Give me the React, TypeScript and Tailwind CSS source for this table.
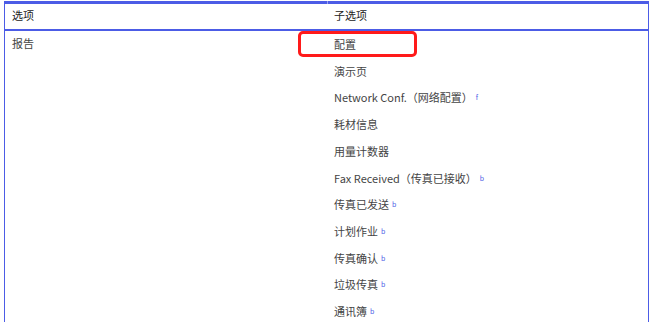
import React from "react";

type Sub = { label: string; note?: string };

const subs: Sub[] = [
  { label: "配置" },
  { label: "演示页" },
  { label: "Network Conf.（网络配置）", note: "f" },
  { label: "耗材信息" },
  { label: "用量计数器" },
  { label: "Fax Received（传真已接收）", note: "b" },
  { label: "传真已发送", note: "b" },
  { label: "计划作业", note: "b" },
  { label: "传真确认", note: "b" },
  { label: "垃圾传真", note: "b" },
  { label: "通讯簿", note: "b" },
];

export default function App() {
  return (
    <div
      className="w-[650px] h-[322px] overflow-hidden bg-white pt-px pl-1 pr-[1px] [text-spacing-trim:space-all]"
      style={{ fontFamily: '"Noto Sans CJK SC", "Noto Sans", sans-serif' }}
    >
      <div className="border-l border-r border-[#4c5ce6] h-[340px]">
        {/* header */}
        <div className="flex h-[30px] text-[11px] text-[#222] border-b-2 border-[#4c5ce6]">
          <div className="w-[322px] border-t-[3px] border-[#4c5ce6] flex items-center pl-[7px] pb-[2px]">选项</div>
          <div className="w-px border-t-[3px] border-[#9aa4f0]" />
          <div className="flex-1 border-t-[3px] border-[#4c5ce6] flex items-center pl-[6px] pb-[2px]">子选项</div>
        </div>
        {/* body */}
        <div className="grid grid-cols-[323px_1fr] text-[11px] text-[#444]">
          <div className="pl-[7px] pt-[4px]">报告</div>
          <div className="flex flex-col">
            {subs.map((s, i) => (
              <div key={i} className="h-[26.7px] flex items-center pl-[6px]">
                {i === 0 ? (
                  <div className="-ml-[36px] w-[119px] h-[26px] border-[3px] border-[#ff1a1a] rounded-[5px] flex items-center pl-[33px]">
                    {s.label}
                  </div>
                ) : (
                  <span>
                    {s.label}
                    {s.note && (
                      <sup className="ml-[3px] text-[7px] text-[#4c5ce6] relative -top-[2px]">{s.note}</sup>
                    )}
                  </span>
                )}
              </div>
            ))}
          </div>
        </div>
      </div>
    </div>
  );
}
